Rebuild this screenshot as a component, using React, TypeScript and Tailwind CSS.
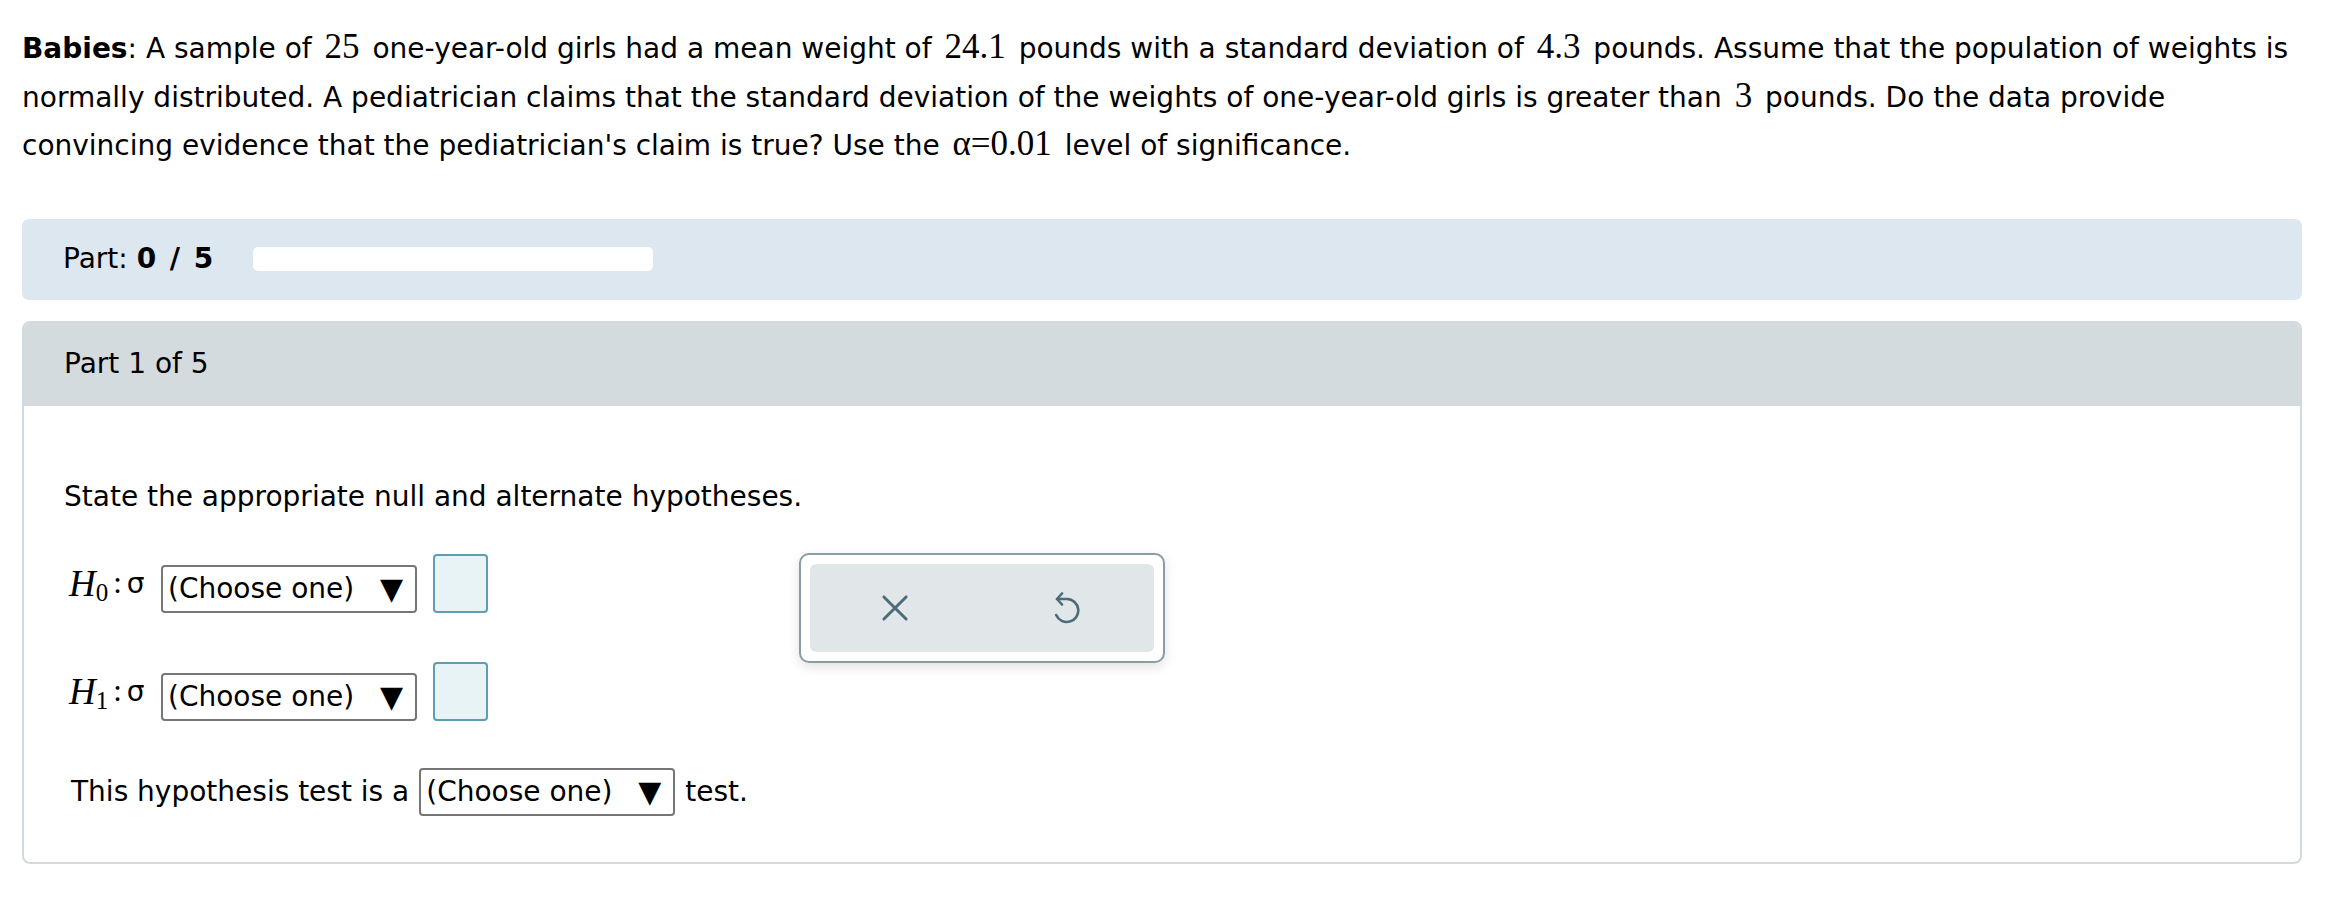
import React from "react";

function Num({ children }: { children: React.ReactNode }) {
  return <span className="mx-[4px] font-['Liberation_Serif',serif] text-[35px] leading-[0]">{children}</span>;
}

function ChooseOne() {
  return (
    <div className="flex h-[48px] w-[256px] items-center justify-between rounded-[4px] border-2 border-[#767676] bg-white pl-[5px] pr-[12px] text-[28px] leading-none text-black">
      <span>(Choose one)</span>
      <span className="text-[30px]">▼</span>
    </div>
  );
}

function AnswerBox() {
  return <div className="h-[59px] w-[55px] rounded-[4px] border-2 border-[#5f9db2] bg-[#e8f3f6]" />;
}

function Hyp({ sub }: { sub: string }) {
  return (
    <div className="flex h-[60px] items-center">
      <div className="flex w-[97px] items-center pl-[5px]">
        <span className="font-['Liberation_Serif',serif] text-[37px] italic">H</span>
        <span className="mt-[18px] font-['Liberation_Serif',serif] text-[25px]">{sub}</span>
        <span className="ml-[5px] font-['Liberation_Serif',serif] text-[31px]">:</span>
        <span className="ml-[5px] text-[28px]">σ</span>
      </div>
      <div className="mt-[10px]">
        <ChooseOne />
      </div>
      <div className="ml-[16px]">
        <AnswerBox />
      </div>
    </div>
  );
}

export default function App() {
  return (
    <div className="min-h-screen bg-white pl-[22px] pr-[42px] pt-[25px] font-['DejaVu_Sans',sans-serif] text-[28px] text-black">
      <p className="leading-[48.5px]">
        <b>Babies</b>: A sample of <Num>25</Num> one-year-old girls had a mean weight of <Num>24.1</Num> pounds with a
        standard deviation of <Num>4.3</Num> pounds. Assume that the population of weights is normally distributed. A
        pediatrician claims that the standard deviation of the weights of one-year-old girls is greater than <Num>3</Num>{" "}
        pounds. Do the data provide convincing evidence that the pediatrician's claim is true? Use the{" "}
        <Num>α=0.01</Num> level of significance.
      </p>

      <div className="mt-[48px] flex h-[81px] items-center rounded-[7px] bg-[#dde7ef] pl-[41px]">
        <span>
          Part:{" "}
          <b>
            0 <span className="mx-[4px]">/</span> 5
          </b>
        </span>
        <div className="ml-[40px] h-[24px] w-[400px] rounded-[5px] bg-white" />
      </div>

      <div className="mt-[21px] overflow-hidden rounded-[8px] border-2 border-[#d3dadf]">
        <div className="flex h-[83px] items-center bg-[#d3dbdf] pl-[40px]">Part 1 of 5</div>
        <div className="pb-[46px] pl-[40px]">
          <p className="mt-[73px] leading-[36px]">State the appropriate null and alternate hypotheses.</p>

          <div className="mt-[39px] flex items-start">
            <div className="flex w-[735px] flex-col gap-[48px]">
              <Hyp sub="0" />
              <Hyp sub="1" />
            </div>
            <div className="-mt-[1px] rounded-[10px] border-2 border-[#8a9ca6] bg-white p-[9px] shadow-[0_4px_12px_rgba(0,0,0,0.12)]">
              <div className="flex h-[88px] w-[344px] items-center justify-around rounded-[6px] bg-[#e1e6e9] text-[#4b6b79]">
                <svg width="28" height="28" viewBox="0 0 24 24" fill="none" stroke="currentColor" strokeWidth="2.5" strokeLinecap="round">
                  <path d="M2.5 2.5L21.5 21.5M21.5 2.5L2.5 21.5" />
                </svg>
                <svg width="32" height="32" viewBox="0 0 32 32" fill="none" stroke="currentColor" strokeWidth="2.6" strokeLinecap="round" strokeLinejoin="round">
                  <path d="M11 1.5L6 7L11 12.5" />
                  <path d="M6 7H16A11.5 11.5 0 1 1 5.2 23" />
                </svg>
              </div>
            </div>
          </div>

          <div className="mt-[46px] flex h-[48px] items-center pl-[7px]">
            <span className="mr-[10px]">This hypothesis test is a</span>
            <ChooseOne />
            <span className="ml-[10px]">test.</span>
          </div>
        </div>
      </div>
    </div>
  );
}
